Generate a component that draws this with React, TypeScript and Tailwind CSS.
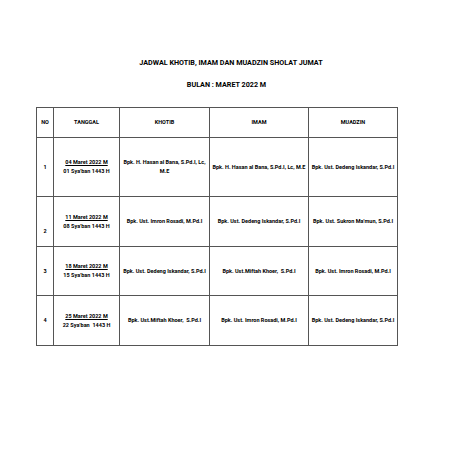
const rows = [
  {
    no: "1",
    date: "04 Maret 2022 M",
    hijri: "01 Sya’ban 1443 H",
    khotib: ["Bpk. H. Hasan al Bana, S.Pd.I, Lc,", "M.E"],
    imam: "Bpk. H. Hasan al Bana, S.Pd.I, Lc, M.E",
    muadzin: "Bpk. Ust. Dedeng Iskandar, S.Pd.I",
    h: "h-[59px]",
    noPad: "",
  },
  {
    no: "2",
    date: "11 Maret 2022 M",
    hijri: "08 Sya’ban 1443 H",
    khotib: ["Bpk. Ust. Imron Rosadi, M.Pd.I"],
    imam: "Bpk. Ust. Dedeng Iskandar, S.Pd.I",
    muadzin: "Bpk. Ust. Sukron Ma’mun, S.Pd.I",
    h: "h-[50px]",
    noPad: "pt-[20px]",
  },
  {
    no: "3",
    date: "18 Maret 2022 M",
    hijri: "15 Sya’ban 1443 H",
    khotib: ["Bpk. Ust. Dedeng Iskandar, S.Pd.I"],
    imam: "Bpk. Ust.Miftah Khoer,  S.Pd.I",
    muadzin: "Bpk. Ust. Imron Rosadi, M.Pd.I",
    h: "h-[49px]",
    noPad: "",
  },
  {
    no: "4",
    date: "25 Maret 2022 M",
    hijri: "22 Sya’ban  1443 H",
    khotib: ["Bpk. Ust.Miftah Khoer,  S.Pd.I"],
    imam: "Bpk. Ust. Imron Rosadi, M.Pd.I",
    muadzin: "Bpk. Ust. Dedeng Iskandar, S.Pd.I",
    h: "h-[50px]",
    noPad: "",
  },
];

const cell = "border border-[#555] text-center align-middle p-0";

export default function App() {
  return (
    <div className="w-[453px] h-[453px] bg-white text-black font-['Liberation_Sans_Narrow','Roboto',sans-serif] font-bold">
      <div className="pt-[58px] text-center text-[7.2px] leading-[9px] pl-[9px] whitespace-pre">
        JADWAL KHOTIB, IMAM DAN MUADZIN SHOLAT JUMAT
      </div>
      <div className="mt-[13px] text-center text-[7.2px] leading-[9px]">
        BULAN : MARET 2022 M
      </div>
      <div className="mt-[18px] pl-[36px]">
        <table className="border-collapse table-fixed w-[361px] text-[5.5px] leading-[9px]">
          <colgroup>
            <col className="w-[17px]" />
            <col className="w-[66px]" />
            <col className="w-[90px]" />
            <col className="w-[99px]" />
            <col className="w-[89px]" />
          </colgroup>
          <thead>
            <tr className="h-[30px]">
              <th className={cell}>NO</th>
              <th className={cell}>TANGGAL</th>
              <th className={cell}>KHOTIB</th>
              <th className={cell}>IMAM</th>
              <th className={cell}>MUADZIN</th>
            </tr>
          </thead>
          <tbody>
            {rows.map((r) => (
              <tr key={r.no} className={r.h}>
                <td className={cell}>
                  <div className={r.noPad}>{r.no}</div>
                </td>
                <td className={cell}>
                  <div className="underline">{r.date}</div>
                  <div className="whitespace-pre">{r.hijri}</div>
                </td>
                <td className={cell}>
                  {r.khotib.map((k) => (
                    <div key={k} className="whitespace-pre">{k}</div>
                  ))}
                </td>
                <td className={cell}>
                  <div className="whitespace-pre">{r.imam}</div>
                </td>
                <td className={cell}>
                  <div className="whitespace-pre">{r.muadzin}</div>
                </td>
              </tr>
            ))}
          </tbody>
        </table>
      </div>
    </div>
  );
}
